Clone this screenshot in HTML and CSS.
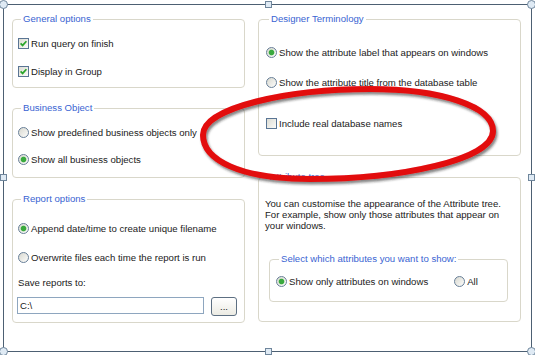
FILE: index.html
```html
<!DOCTYPE html>
<html>
<head>
<meta charset="utf-8">
<link rel="stylesheet" href="styles.css">
</head>
<body>
<div class="frame">
  <div class="col">
    <section class="group g-general">
      <div class="title">General options</div>
      <div class="rows r-general">
        <div class="opt"><span class="cb"><svg viewBox="0 0 9 9" width="9" height="9"><path d="M1.6 4.4 L3.6 6.4 L7.4 2.2" fill="none" stroke="#2aa52a" stroke-width="1.7"/></svg></span>Run query on finish</div>
        <div class="opt"><span class="cb"><svg viewBox="0 0 9 9" width="9" height="9"><path d="M1.6 4.4 L3.6 6.4 L7.4 2.2" fill="none" stroke="#2aa52a" stroke-width="1.7"/></svg></span>Display in Group</div>
      </div>
    </section>
    <section class="group g-business">
      <div class="title">Business Object</div>
      <div class="rows r-business">
        <div class="opt"><span class="rd"></span>Show predefined business objects only</div>
        <div class="opt"><span class="rd on"></span>Show all business objects</div>
      </div>
    </section>
    <section class="group g-report">
      <div class="title">Report options</div>
      <div class="rows r-report">
        <div class="opt"><span class="rd on"></span>Append date/time to create unique filename</div>
        <div class="opt"><span class="rd"></span>Overwrite files each time the report is run</div>
        <div class="opt">Save reports to:</div>
        <div class="path-row">
          <div class="path-input">C:\</div>
          <div class="browse">...</div>
        </div>
      </div>
    </section>
  </div>
  <div class="col">
    <section class="group g-designer">
      <div class="title">Designer Terminology</div>
      <div class="rows r-designer">
        <div class="opt"><span class="rd on"></span>Show the attribute label that appears on windows</div>
        <div class="opt"><span class="rd"></span>Show the attribute title from the database table</div>
        <div class="opt"><span class="cb"></span>Include real database names</div>
      </div>
    </section>
    <section class="group g-attr">
      <div class="title">Attribute tree</div>
      <p class="desc">You can customise the appearance of the Attribute tree.<br>For example, show only those attributes that appear on<br>your windows.</p>
      <section class="group g-inner">
        <div class="title">Select which attributes you want to show:</div>
        <div class="inner-row">
          <div class="opt"><span class="rd on"></span>Show only attributes on windows</div>
          <div class="opt opt-all"><span class="rd"></span>All</div>
        </div>
      </section>
    </section>
  </div>
  <span class="h c tl"></span><span class="h c tr"></span><span class="h c bl"></span><span class="h c br"></span>
  <span class="h s tm"></span><span class="h s bm"></span><span class="h s ml"></span><span class="h s mr"></span>
</div>
<svg class="mark" width="535" height="355" viewBox="0 0 535 355">
  <defs>
    <filter id="sh" x="-10%" y="-20%" width="120%" height="140%">
      <feDropShadow dx="1.5" dy="2.5" stdDeviation="1.3" flood-color="#222" flood-opacity="0.55"/>
    </filter>
  </defs>
  <path d="M 203 135 C 203 107, 290 89, 370 89 C 440 89, 493 106, 493 131 C 493 160, 400 179, 310 179 C 240 179, 203 160, 203 135 Z" fill="none" stroke="#e2080c" stroke-width="6" filter="url(#sh)"/>
</svg>
</body>
</html>
```
FILE: styles.css
```css
html, body {
  margin: 0;
}
body {
  box-sizing: border-box;
  width: 535px;
  height: 355px;
  padding: 4px 0 0 3px;
  overflow: hidden;
  background: #fff;
  position: relative;
  font-family: "Liberation Sans", Arial, sans-serif;
  font-size: 9.6px;
  color: #1a1a1a;
}
.frame {
  box-sizing: border-box;
  width: 529px;
  height: 348px;
  border: 1px solid #4d6073;
  position: relative;
  display: grid;
  grid-template-columns: 233px 263px;
  column-gap: 13px;
  align-items: start;
  padding: 14px 0 0 8px;
}
.col {
  display: flex;
  flex-direction: column;
}
.group {
  box-sizing: border-box;
  border: 1px solid #d9d7ca;
  border-radius: 4px;
}
.title {
  width: fit-content;
  margin: -7px 0 0 3px;
  padding: 0 2px;
  line-height: 12px;
  background: #fff;
  color: #3a64d2;
}
.rows {
  display: flex;
  flex-direction: column;
}
.opt {
  display: flex;
  align-items: center;
  gap: 2px;
  height: 14px;
  white-space: nowrap;
}
.cb {
  box-sizing: border-box;
  width: 11px;
  height: 11px;
  flex: none;
  border: 1px solid #5a7594;
  background: linear-gradient(135deg, #dcdcd4, #fbfbf8);
  display: flex;
  align-items: center;
  justify-content: center;
}
.rd {
  box-sizing: border-box;
  width: 11px;
  height: 11px;
  flex: none;
  border: 1px solid #687f98;
  border-radius: 50%;
  background: linear-gradient(135deg, #d8d8d0, #fdfdfb);
}
.rd.on {
  background: radial-gradient(circle, #3aa93e 0 2.3px, #8fd08f 2.8px, transparent 3.3px), linear-gradient(135deg, #d8d8d0, #fdfdfb);
}

/* left column */
.g-general {
  height: 69px;
  padding-left: 5px;
  margin-bottom: 20px;
}
.r-general {
  margin-top: 11px;
  gap: 14px;
}
.g-business {
  height: 70px;
  padding-left: 5px;
  margin-bottom: 21px;
}
.r-business {
  margin-top: 11px;
  gap: 13px;
}
.g-report {
  height: 124px;
  padding-left: 5px;
}
.r-report {
  margin-top: 16px;
}
.r-report .opt:nth-child(2) {
  margin-top: 15px;
}
.r-report .opt:nth-child(3) {
  margin-top: 11px;
}
.path-row {
  display: flex;
  align-items: flex-start;
  margin-top: 8px;
}
.path-input {
  box-sizing: border-box;
  width: 187px;
  height: 17px;
  margin-left: -1px;
  border: 1px solid #8ea6bf;
  padding-left: 2px;
  display: flex;
  align-items: center;
}
.browse {
  box-sizing: border-box;
  width: 26px;
  height: 19px;
  margin-left: 7px;
  border: 1px solid #5d6f82;
  border-radius: 3px;
  background: linear-gradient(#ffffff, #ecebe3);
  display: flex;
  align-items: center;
  justify-content: center;
  line-height: 1;
}

/* right column */
.g-designer {
  height: 137px;
  padding-left: 7px;
  margin-bottom: 21px;
}
.r-designer {
  margin-top: 20px;
}
.r-designer .opt:nth-child(2) {
  margin-top: 16px;
}
.r-designer .opt:nth-child(3) {
  margin-top: 27px;
}
.g-attr {
  height: 145px;
  padding-left: 6px;
}
.desc {
  margin: 15px 0 0;
  line-height: 11px;
  white-space: nowrap;
}
.g-inner {
  width: 239px;
  height: 43px;
  margin: 28px 0 0 4px;
  padding-left: 6px;
}
.inner-row {
  display: flex;
  margin-top: 9px;
}
.opt-all {
  margin-left: 26px;
}

/* selection handles */
.h {
  position: absolute;
  box-sizing: border-box;
  border: 1px solid #6f869c;
  background: #dfeaf4;
}
.c {
  width: 9px;
  height: 9px;
  border-radius: 50%;
}
.s {
  width: 7px;
  height: 7px;
}
.tl { left: -5px; top: -5px; }
.tr { right: -5px; top: -5px; }
.bl { left: -5px; bottom: -5px; }
.br { right: -5px; bottom: -5px; }
.tm { left: calc(50% - 3px); top: -4px; }
.bm { left: calc(50% - 3px); bottom: -4px; }
.ml { left: -4px; top: calc(50% - 4px); }
.mr { right: -4px; top: calc(50% - 4px); }

.mark {
  position: absolute;
  left: 0;
  top: 0;
  pointer-events: none;
}
```
